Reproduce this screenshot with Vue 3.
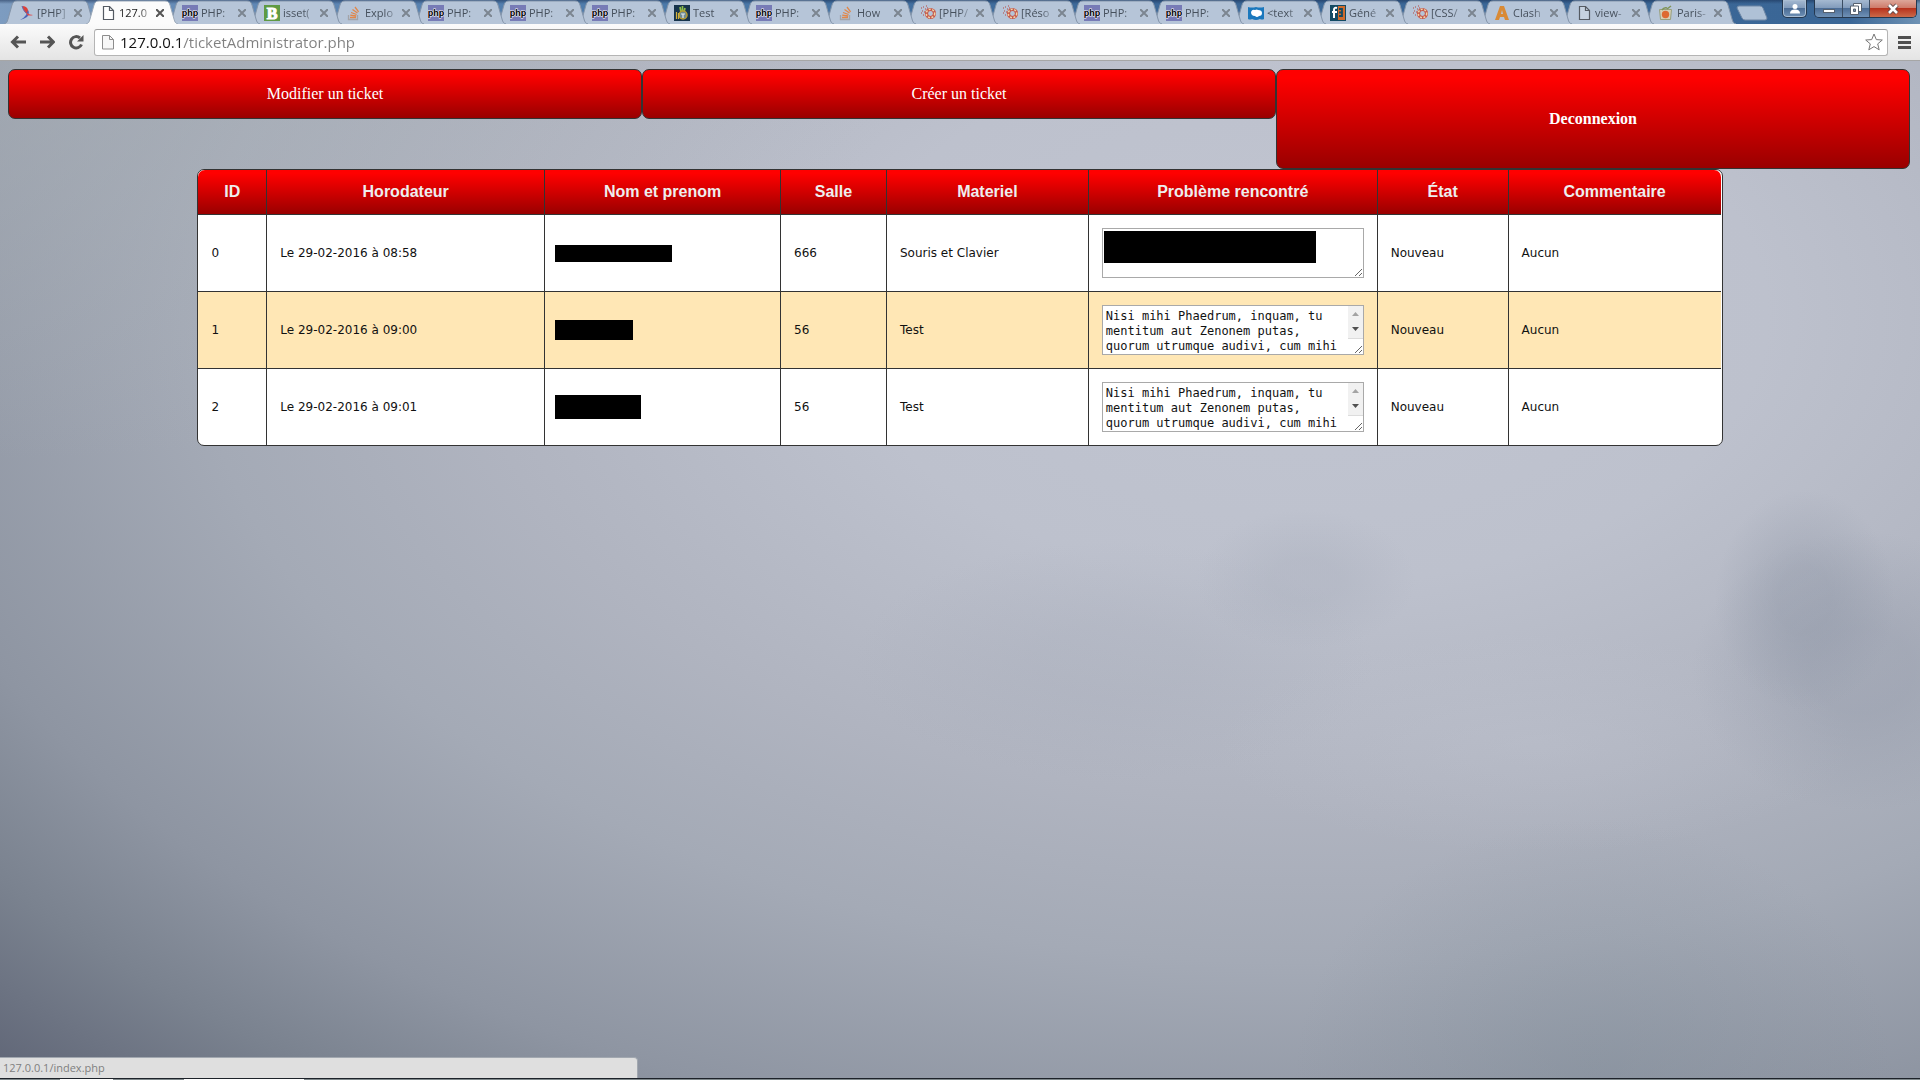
<script setup>
import { ref } from 'vue'

// Open browser tabs, left to right
const tabs = [
  { icon: 'feather', title: '[PHP]' },
  { icon: 'page', title: '127.0', active: true },
  { icon: 'php', title: 'PHP:' },
  { icon: 'bold', title: 'isset(' },
  { icon: 'stack', title: 'Explo' },
  { icon: 'php', title: 'PHP:' },
  { icon: 'php', title: 'PHP:' },
  { icon: 'php', title: 'PHP:' },
  { icon: 'test', title: 'Test' },
  { icon: 'php', title: 'PHP:' },
  { icon: 'stack', title: 'How' },
  { icon: 'zero', title: '[PHP/' },
  { icon: 'zero', title: '[Réso' },
  { icon: 'php', title: 'PHP:' },
  { icon: 'php', title: 'PHP:' },
  { icon: 'mdn', title: '<text' },
  { icon: 'gen', title: 'Géné' },
  { icon: 'zero', title: '[CSS/' },
  { icon: 'clash', title: 'Clash' },
  { icon: 'page', title: 'view-' },
  { icon: 'paris', title: 'Paris-' }
]

const url = ref('127.0.0.1/ticketAdministrator.php')

const headers = [
  'ID', 'Horodateur', 'Nom et prenom', 'Salle', 'Materiel',
  'Problème rencontré', 'État', 'Commentaire'
]

const lorem = 'Nisi mihi Phaedrum, inquam, tu mentitum aut Zenonem putas, quorum utrumque audivi, cum mihi'

// Names are masked, only the size of the mask is kept
const tickets = ref([
  { id: 0, date: 'Le 29-02-2016 à 08:58', mask: { width: 117, height: 17 }, room: '666', gear: 'Souris et Clavier', problem: '', hidden: true, state: 'Nouveau', comment: 'Aucun' },
  { id: 1, date: 'Le 29-02-2016 à 09:00', mask: { width: 78, height: 20 }, room: '56', gear: 'Test', problem: lorem, state: 'Nouveau', comment: 'Aucun' },
  { id: 2, date: 'Le 29-02-2016 à 09:01', mask: { width: 86, height: 24 }, room: '56', gear: 'Test', problem: lorem, state: 'Nouveau', comment: 'Aucun' }
])
</script>

<template>
  <div class="browser">
    <header class="chrome">
      <div class="tab-strip">
        <div class="tabs">
          <div
            v-for="(tab, index) in tabs"
            :key="index"
            class="tab"
            :class="{ active: tab.active }"
            :style="{ zIndex: tab.active ? 40 : 30 - index }"
          >
            <svg class="tab-shape" viewBox="0 0 92 24" preserveAspectRatio="none">
              <path d="M0 24 C3 23 3 22 4 19 L8 5 C9 2 10 1 13 1 H79 C82 1 83 2 84 5 L88 19 C89 22 89 23 92 24" />
            </svg>
            <svg class="favicon" viewBox="0 0 16 16">
              <template v-if="tab.icon === 'feather'">
                <path d="M4 1q5 0 6 4 1 3-1 4Q5 6 4 1z" fill="#dc4038" />
                <path d="M10 5q2 4-1 7-3 2-7 3 4-2 6-5z" fill="#4a63b8" />
                <path d="M9 8q3 2 6 2-3 1-6 0z" fill="#e04848" />
                <path d="M4 1q1 4 4 7" fill="none" stroke="#5e6fb8" />
              </template>
              <template v-else-if="tab.icon === 'page'">
                <path d="M3.500 1.500h6l4 4v9h-10z" :fill="tab.active ? '#fff' : '#c6d2e0'" stroke="#555b63" stroke-width="1.200" />
                <path d="M9.500 1.500v4h4" fill="none" stroke="#555b63" stroke-width="1.200" />
              </template>
              <template v-else-if="tab.icon === 'php'">
                <rect width="16" height="16" fill="#777bb6" />
                <text class="php-text" x="8" y="11" text-anchor="middle">php</text>
              </template>
              <template v-else-if="tab.icon === 'bold'">
                <rect width="16" height="16" fill="#5f9a43" />
                <text class="bold-text" x="8" y="14" text-anchor="middle">B</text>
              </template>
              <template v-else-if="tab.icon === 'stack'">
                <path d="M2.500 10v4.500h9V10" fill="none" stroke="#a3a4a8" stroke-width="1.300" />
                <path d="M4 12.500h6M4.200 10.200l6 .8M5 7.500l5.600 2M6.500 4.500l5 3.500M9 2l3.600 4.800" fill="none" stroke="#e0874a" stroke-width="1.300" />
              </template>
              <template v-else-if="tab.icon === 'test'">
                <rect width="16" height="16" fill="#17344c" />
                <path d="M6 2l1 5M8.500 1v5M11 3l-1 4" stroke="#8fbe4c" stroke-width="1.700" />
                <circle cx="9" cy="10" r="4" fill="#6d8b94" stroke="#b79c2f" stroke-width="1.500" />
                <path d="M2.500 7v7M4.500 8v6" stroke="#d3b13c" stroke-width="1.200" />
                <path d="M7 9h4M9 9v4" stroke="#e6ecec" stroke-width="1.200" />
              </template>
              <template v-else-if="tab.icon === 'zero'">
                <circle cx="10.500" cy="8.500" r="4" fill="none" stroke="#c65a4c" stroke-width="3.200" />
                <circle cx="10.500" cy="8.500" r="4.200" fill="none" stroke="#f0d5a8" stroke-width="1.500" stroke-dasharray="2 1.500" />
                <path d="M1 3h1M3 2h1M5 4h1M2 6h1M4 7h1M1 8h1M6 1h1M3 10h1M7 3h1" stroke="#b5463f" stroke-width="1.200" />
              </template>
              <template v-else-if="tab.icon === 'mdn'">
                <path d="M0 2q4 1 8 0 4 1 8 0v12q-2 1-4 0-4 2-8 0-2 1-4 0z" fill="#1b78bd" />
                <path d="M3 7q1-3 4-2 2-1 3 0 4 0 4 3 0 3-3 3-2 2-4 0-4 0-4-4z" fill="#fff" />
              </template>
              <template v-else-if="tab.icon === 'gen'">
                <rect width="16" height="16" fill="#134a63" />
                <rect x="8" y="1" width="7" height="14" fill="#cf6a2b" />
                <path d="M7 3q-3-1-3 2v8M2 7h5" fill="none" stroke="#fff" stroke-width="2" />
                <path d="M9 4h3v7H9M9 7.500h3" fill="none" stroke="#134a63" stroke-width="1.800" />
              </template>
              <template v-else-if="tab.icon === 'clash'">
                <path d="M6 1h4l5 14h-4l-1-3H6l-1 3H1zM8 5L7 9h2z" fill="#d98a35" fill-rule="evenodd" />
              </template>
              <template v-else>
                <path d="M1.500 4.500h12l-1 10h-10z" fill="#d5cfb6" stroke="#98a07e" />
                <path d="M4 5q2-3 5-2M9 4l4-3" fill="none" stroke="#7f9457" stroke-width="1.500" />
                <circle cx="7.500" cy="9.500" r="3.700" fill="#dd6a32" />
              </template>
            </svg>
            <span class="tab-title">{{ tab.title }}</span>
            <button type="button" class="tab-close" aria-label="Fermer l'onglet">
              <svg viewBox="0 0 8 8"><path d="M0 0l8 8M8 0L0 8" /></svg>
            </button>
          </div>
          <button type="button" class="new-tab" aria-label="Nouvel onglet">
            <svg viewBox="0 0 32 16">
              <path d="M3 1h21q2 0 3 2l4 10q0 2-2 2H9q-2 0-3-2L1 3q0-2 2-2z" />
            </svg>
          </button>
        </div>
        <div class="window-buttons">
          <button type="button" class="win-btn user" aria-label="Profil">
            <svg viewBox="0 0 12 12">
              <circle cx="6" cy="3.500" r="2.500" fill="#fff" />
              <path d="M1 10.500q0-4 5-4t5 4z" fill="#fff" />
            </svg>
          </button>
          <div class="win-group">
            <button type="button" class="win-btn" aria-label="Réduire">
              <svg viewBox="0 0 12 12"><rect x="0.500" y="6.500" width="11" height="3" fill="#fff" stroke="#56616f" /></svg>
            </button>
            <button type="button" class="win-btn" aria-label="Restaurer">
              <svg viewBox="0 0 12 12">
                <path d="M3.500 .5h8v8h-8z" fill="#fff" stroke="#56616f" />
                <path d="M.5 3h8v8.500h-8z" fill="#fff" stroke="#56616f" />
                <path d="M3.500 6h2v2.500h-2z" fill="#7d93ae" stroke="#56616f" />
              </svg>
            </button>
            <button type="button" class="win-btn close" aria-label="Fermer">
              <svg viewBox="0 0 12 12">
                <path d="M2 2l8 8M10 2l-8 8" stroke="#5a4748" stroke-width="4.500" />
                <path d="M2 2l8 8M10 2l-8 8" stroke="#fff" stroke-width="2.600" />
              </svg>
            </button>
          </div>
        </div>
      </div>

      <div class="toolbar">
        <button type="button" class="tool-btn" aria-label="Précédent">
          <svg viewBox="0 0 16 16"><path d="M16 8H3M8 2.500L2.500 8 8 13.500" /></svg>
        </button>
        <button type="button" class="tool-btn" aria-label="Suivant">
          <svg viewBox="0 0 16 16"><path d="M1 8h13M9 2.500L14.500 8 9 13.500" /></svg>
        </button>
        <button type="button" class="tool-btn" aria-label="Actualiser">
          <svg viewBox="0 0 16 16">
            <path d="M13.500 10.500A5.700 5.700 0 1 1 12 4" />
            <path d="M15.500 1v6.500H9z" class="solid" />
          </svg>
        </button>
        <div class="omnibox">
          <svg class="page-icon" viewBox="0 0 12 16">
            <path d="M.5 1.500h7l4 4v9.500H.5z" fill="#f7f7f7" stroke="#8d8d8d" />
            <path d="M7.500 1.500v4h4" fill="none" stroke="#8d8d8d" />
          </svg>
          <input v-model="url" class="url" type="text" aria-label="Adresse" />
          <button type="button" class="star" aria-label="Ajouter aux favoris">
            <svg viewBox="0 0 18 18">
              <path d="M9 1l2.300 5.600 6 .4-4.600 3.900 1.500 5.900L9 13.600l-5.200 3.200 1.500-5.900L.7 7l6-.4z" />
            </svg>
          </button>
        </div>
        <button type="button" class="menu" aria-label="Menu">
          <svg viewBox="0 0 13 13">
            <path d="M0 1.500h13M0 6.500h13M0 11.500h13" />
          </svg>
        </button>
      </div>
    </header>

    <main class="page">
      <nav class="actions">
        <a href="#modifier" class="action">Modifier un ticket</a>
        <a href="#creer" class="action">Créer un ticket</a>
        <a href="#index" class="action logout">Deconnexion</a>
      </nav>

      <div class="table-frame">
        <table class="tickets">
          <colgroup>
            <col class="col-id" />
            <col class="col-date" />
            <col class="col-name" />
            <col class="col-room" />
            <col class="col-gear" />
            <col class="col-problem" />
            <col class="col-state" />
            <col class="col-comment" />
          </colgroup>
          <thead>
            <tr>
              <th v-for="header in headers" :key="header" scope="col">{{ header }}</th>
            </tr>
          </thead>
          <tbody>
            <tr v-for="ticket in tickets" :key="ticket.id">
              <td>{{ ticket.id }}</td>
              <td>{{ ticket.date }}</td>
              <td class="name-cell">
                <div
                  class="mask"
                  :style="{ width: ticket.mask.width + 'px', height: ticket.mask.height + 'px' }"
                ></div>
              </td>
              <td>{{ ticket.room }}</td>
              <td>{{ ticket.gear }}</td>
              <td>
                <div class="problem">
                  <textarea
                    v-model="ticket.problem"
                    :aria-label="'Problème du ticket ' + ticket.id"
                  ></textarea>
                  <div v-if="ticket.hidden" class="problem-mask"></div>
                  <div v-else class="scrollbar">
                    <svg viewBox="0 0 15 32">
                      <path d="M4 10h7L7.500 6z" fill="#a3a3a3" />
                      <path d="M4 21h7l-3.500 4z" fill="#505050" />
                    </svg>
                  </div>
                </div>
              </td>
              <td>{{ ticket.state }}</td>
              <td>{{ ticket.comment }}</td>
            </tr>
          </tbody>
        </table>
      </div>

      <div class="status">127.0.0.1/index.php</div>
    </main>
    <footer class="taskbar"></footer>
  </div>
</template>

<style>
body {
  margin: 0;
}
</style>

<style scoped>
.browser {
  display: flex;
  flex-direction: column;
  min-height: 100vh;
  font-family: "Liberation Serif", "Times New Roman", serif;
}

button {
  padding: 0;
  border: none;
  background: none;
  display: flex;
  align-items: center;
  justify-content: center;
}

/* Browser frame */
.tab-strip {
  display: flex;
  justify-content: space-between;
  height: 24px;
  padding: 0 3px 0 4px;
  background: linear-gradient(rgba(20, 40, 75, 0.5), rgba(20, 40, 75, 0) 4px),
    linear-gradient(90deg, #7d9cc0 0, #6289b6 200px, #4a78a8 700px, #3c6898 1100px, #3a6696 1850px, #6f93b5 1920px);
}

.tabs {
  display: flex;
  align-items: flex-start;
}

.tab {
  position: relative;
  display: flex;
  align-items: center;
  box-sizing: border-box;
  width: 92px;
  height: 24px;
  margin-right: -10px;
  padding: 2px 14px 0 14px;
  color: #46505c;
}

.tab-shape {
  position: absolute;
  inset: 0;
  width: 100%;
  height: 100%;
}

.tab-shape path {
  fill: #b6c5d8;
  stroke: #8495aa;
  stroke-width: 1;
}

.tab.active {
  color: #222;
}

.tab.active .tab-shape path {
  fill: #fbfbfb;
  stroke: #9aa8b8;
}

.favicon {
  position: relative;
  flex: none;
  width: 16px;
  height: 16px;
}

.php-text {
  font: bold 9px "Liberation Sans", Arial, sans-serif;
  fill: #000;
  stroke: #fff;
  stroke-width: 1px;
  paint-order: stroke;
}

.bold-text {
  font: bold 16px "Liberation Serif", serif;
  fill: #fff;
  stroke: #fff;
}

.tab-title {
  position: relative;
  flex: none;
  width: 34px;
  margin-left: 3px;
  white-space: nowrap;
  font: 11px/16px "Open Sans", sans-serif;
  mask-image: linear-gradient(90deg, #000 20px, rgba(0, 0, 0, 0.3) 30px);
}

.tab-close {
  position: relative;
  flex: none;
  width: 8px;
  margin-left: 3px;
}

.tab-close svg {
  width: 8px;
  height: 8px;
}

.tab-close path {
  stroke: #7c8691;
  stroke-width: 2;
}

.active .tab-close path {
  stroke: #555;
}

.new-tab {
  margin: 5px 0 0 10px;
}

.new-tab svg {
  width: 32px;
  height: 16px;
}

.new-tab path {
  fill: #afc1d6;
  stroke: #6e87a5;
}

.window-buttons {
  display: flex;
  gap: 7px;
}

.win-btn {
  width: 27px;
  height: 17px;
  background: linear-gradient(#a5b9d1, #829cbc 45%, #4c6d96 50%, #6f91b6);
}

.win-btn svg {
  width: 12px;
  height: 12px;
}

.win-btn.user {
  box-sizing: border-box;
  width: 25px;
  height: 18px;
  border: 1px solid #25384f;
  border-top: none;
  border-radius: 0 0 5px 5px;
  box-shadow: inset 0 0 0 1px #a9bdd3;
}

.win-group {
  display: flex;
  height: 17px;
  border: 1px solid #25384f;
  border-top: none;
  border-radius: 0 0 5px 5px;
  overflow: hidden;
}

.win-group .win-btn + .win-btn {
  border-left: 1px solid #3b4d63;
}

.win-btn.close {
  width: 47px;
  background: linear-gradient(#dda79a, #cf7c6b 45%, #b8331d 50%, #cb6a49);
}

.toolbar {
  display: flex;
  align-items: center;
  height: 36px;
  padding-left: 10px;
  padding-right: 9px;
  background: linear-gradient(#fbfbfb, #e4e4e4);
  border-bottom: 1px solid #a6a6a6;
}

.tool-btn {
  width: 16px;
  margin-right: 13px;
}

.tool-btn:nth-child(3) {
  margin-right: 10px;
}

.tool-btn svg {
  width: 16px;
  height: 16px;
}

.tool-btn path {
  fill: none;
  stroke: #555;
  stroke-width: 3;
}

.tool-btn .solid {
  fill: #555;
  stroke: none;
}

.omnibox {
  display: flex;
  align-items: center;
  flex: 1;
  box-sizing: border-box;
  height: 27px;
  padding: 0 4px 0 7px;
  background: #fff;
  border: 1px solid #b5b5b5;
  border-top-color: #9c9c9c;
  border-radius: 3px;
}

.page-icon {
  width: 12px;
  height: 16px;
}

.url {
  flex: 1;
  min-width: 0;
  margin-left: 6px;
  padding: 0;
  border: none;
  outline: none;
  font: 15px/22px "Open Sans", sans-serif;
  color: transparent;
  background: linear-gradient(90deg, #111 62px, #808080 62px);
  background-clip: text;
}

.star svg {
  width: 18px;
  height: 18px;
}

.star path {
  fill: #fff;
  stroke: #777;
  stroke-width: 1;
}

.menu {
  width: 13px;
  margin-left: 10px;
}

.menu svg {
  width: 13px;
  height: 13px;
}

.menu path {
  stroke: #505050;
  stroke-width: 3;
}

/* Page, with the stormy sky behind */
.page {
  position: relative;
  flex: 1;
  padding: 8px;
  background:
    radial-gradient(ellipse 90px 110px at 94% 53%, rgba(140, 148, 164, 0.35) 30%, transparent),
    radial-gradient(ellipse 170px 140px at 97% 60%, rgba(140, 148, 164, 0.35) 30%, transparent),
    radial-gradient(ellipse 110px 70px at 68% 51%, rgba(160, 166, 180, 0.25) 30%, transparent),
    radial-gradient(ellipse 260px 120px at 58% 59%, rgba(160, 166, 180, 0.2) 30%, transparent),
    radial-gradient(ellipse 320px 110px at 80% 67%, rgba(195, 199, 211, 0.3), transparent),
    radial-gradient(ellipse 300px 260px at 83% 100%, rgba(122, 135, 147, 0.35), transparent),
    radial-gradient(ellipse 900px 400px at 0% 0%, rgba(175, 182, 188, 0.5), transparent),
    radial-gradient(ellipse farthest-corner at 68% 25%, #c1c5d1, #bdc1cd 25%, #b0b4c0 45%, #a4aab6 60%, #8e95a2 78%, #7a828f 88%, #5f6576);
}

.actions {
  display: flex;
  align-items: flex-start;
  padding-right: 2px;
}

.action {
  flex: 1;
  box-sizing: border-box;
  border: 1px solid #333;
  border-radius: 7px;
  background: linear-gradient(#f00 8%, #990000);
  color: #fff;
  font-size: 16px;
  line-height: 48px;
  text-align: center;
  text-decoration: none;
}

.logout {
  line-height: 98px;
  font-weight: bold;
}

.table-frame {
  box-sizing: border-box;
  width: calc(80% + 2px);
  margin: 0 auto;
  padding-right: 1px;
  background: #fff;
  border: 1px solid #333;
  border-radius: 7px;
}

.tickets {
  width: 100%;
  table-layout: fixed;
  border-collapse: separate;
  border-spacing: 0;
  font: 12px/16px "DejaVu Sans", Verdana, sans-serif;
  color: #111;
}

.col-id { width: 4.460%; }
.col-date { width: 18.250%; }
.col-name { width: 15.500%; }
.col-room { width: 6.960%; }
.col-gear { width: 13.260%; }
.col-problem { width: 18.980%; }
.col-state { width: 8.600%; }
.col-comment { width: 13.990%; }

.tickets th {
  height: 44px;
  padding: 0;
  background: linear-gradient(#f00 8%, #990000);
  border-bottom: 1px solid #333;
  color: #eee;
  font: bold 16px/20px "Liberation Sans", Arial, sans-serif;
}

.tickets th:first-child {
  border-top-left-radius: 7px;
}

.tickets th:last-child {
  border-top-right-radius: 7px;
}

.tickets td {
  padding: 13px;
  border-bottom: 1px solid #333;
}

.tickets th + th,
.tickets td + td {
  border-left: 1px solid #333;
}

.tickets tbody tr:last-child td {
  border-bottom: none;
}

.tickets tbody tr:nth-child(even) td {
  background: #ffe7b5;
}

.tickets .name-cell {
  padding-left: 10px;
}

.mask,
.problem-mask {
  background: #000;
}

.problem {
  position: relative;
}

.problem textarea {
  display: block;
  box-sizing: border-box;
  width: 100%;
  height: 50px;
  margin: 0;
  padding: 3px 18px 0 3px;
  border: 1px solid #a9a9a9;
  background: #fff;
  color: #111;
  font: 12px/15px "DejaVu Sans Mono", Consolas, monospace;
}

.problem-mask {
  position: absolute;
  top: 3px;
  left: 2px;
  width: 212px;
  height: 32px;
}

.scrollbar {
  position: absolute;
  top: 1px;
  right: 1px;
  width: 15px;
  height: 32px;
  background: #f1f1f1;
  border-bottom: 1px solid #dcdcdc;
}

.scrollbar svg {
  display: block;
  width: 15px;
  height: 32px;
}

.status {
  position: absolute;
  left: 0;
  bottom: 0;
  box-sizing: border-box;
  width: 638px;
  padding-left: 3px;
  background: #dfdfdf;
  border: 1px solid #a2a8b0;
  border-left: none;
  border-bottom: none;
  border-top-right-radius: 4px;
  color: #808080;
  font: 11px/20px "Open Sans", sans-serif;
}

.taskbar {
  height: 1px;
  border-top: 1px solid #1d2229;
  background: linear-gradient(90deg, #7f888b 60px, #fff 60px, #fff 113px, #7f888b 113px, #7f888b 184px, #fff 184px, #fff 304px, #7f888b 304px);
}
</style>
